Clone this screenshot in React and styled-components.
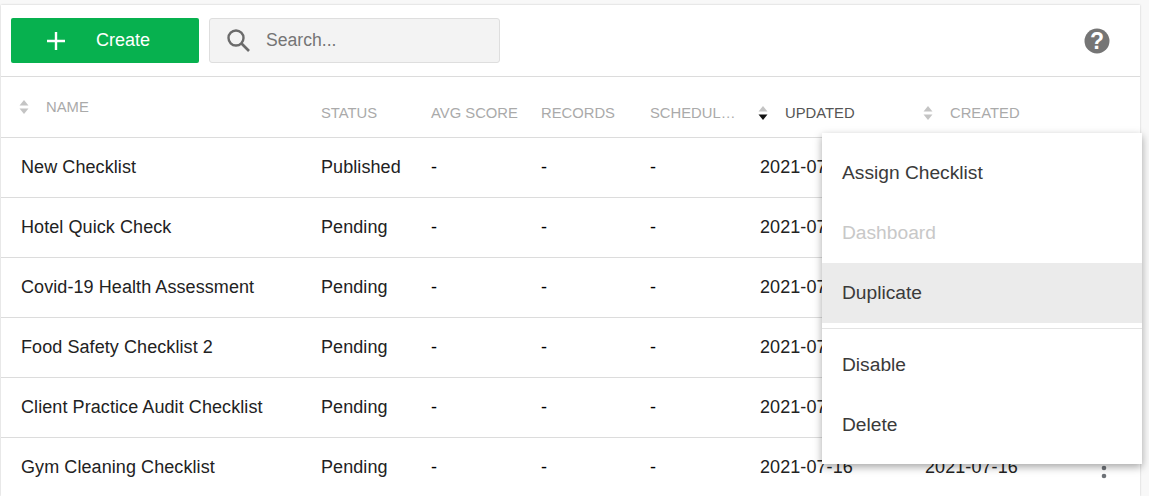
import React from 'react'
import styled, { createGlobalStyle } from 'styled-components'

const rows = [
    { name: 'New Checklist', status: 'Published' },
    { name: 'Hotel Quick Check', status: 'Pending' },
    { name: 'Covid-19 Health Assessment', status: 'Pending' },
    { name: 'Food Safety Checklist 2', status: 'Pending' },
    { name: 'Client Practice Audit Checklist', status: 'Pending' },
    { name: 'Gym Cleaning Checklist', status: 'Pending' },
]

const GRID = '300px 110px 110px 109px 110px 165px 1fr'

const GlobalStyle = createGlobalStyle`
    html, body {
        margin: 0;
        height: 100%;
        overflow: hidden;
        background: #f8f8f8;
        font-family: "Liberation Sans", Arial, sans-serif;
    }
`
const Page = styled.div`
    position: relative;
    width: 1149px;
    height: 496px;
    padding: 5px 9px 0 1px;
    box-sizing: border-box;
    overflow: hidden;
`
const Card = styled.div`
    background: #fff;
    height: 100%;
    box-shadow: 0 0 2px rgba(0, 0, 0, 0.2);
`
const Toolbar = styled.div`
    display: flex;
    align-items: center;
    height: 72px;
    padding: 0 30px 0 10px;
    box-sizing: border-box;
    border-bottom: 1px solid #dcdcdc;
    gap: 10px;
`
const CreateButton = styled.button`
    display: flex;
    align-items: center;
    width: 188px;
    height: 45px;
    padding: 0 0 0 36px;
    border: 0;
    border-radius: 2px;
    background: #07b14f;
    color: #fff;
    font: 18px "Liberation Sans", Arial, sans-serif;
    gap: 31px;
`
const SearchBox = styled.div`
    display: flex;
    align-items: center;
    width: 291px;
    height: 45px;
    padding-left: 16px;
    box-sizing: border-box;
    background: #f3f3f3;
    border: 1px solid #dedede;
    border-radius: 3px;
    color: #757575;
    font-size: 17.6px;
    gap: 14px;
`
const HelpIcon = styled.svg`
    margin-left: auto;
    width: 26px;
    height: 26px;
`
const HeadRow = styled.div`
    display: grid;
    grid-template-columns: ${GRID};
    height: 60px;
    border-bottom: 1px solid #dcdcdc;
    padding-left: 20px;
`
const HeadCell = styled.div`
    display: flex;
    align-items: center;
    align-self: ${({ $high }) => ($high ? 'start' : 'end')};
    height: 20px;
    margin-top: ${({ $high }) => ($high ? '20px' : '0')};
    margin-bottom: ${({ $high }) => ($high ? '0' : '14px')};
    margin-left: ${({ $sorted }) => ($sorted ? '-2px' : '0')};
    gap: ${({ $sorted }) => ($sorted ? '17px' : '0')};
    font-size: 14.8px;
    white-space: nowrap;
    color: ${({ $active }) => ($active ? '#555' : '#aaa')};
`
const Clipped = styled.span`
    display: block;
    width: 86px;
    overflow: hidden;
    text-overflow: ellipsis;
`
const Row = styled.div`
    display: grid;
    grid-template-columns: ${GRID};
    align-items: center;
    height: 59px;
    border-bottom: 1px solid #dcdcdc;
    padding-left: 20px;
    color: #222;
    font-size: 18px;
    letter-spacing: 0.08px;
    white-space: nowrap;
    &:last-child {
        border-bottom: 0;
    }
`
const Dash = styled.span`
    color: #000;
`
const Kebab = styled.svg`
    position: absolute;
    left: 1098px;
    top: 457px;
    width: 12px;
    height: 22px;
`
const Menu = styled.div`
    position: absolute;
    left: 822px;
    top: 133px;
    width: 320px;
    padding: 10px 0 9px;
    background: #fff;
    box-shadow: 0 3px 8px rgba(0, 0, 0, 0.35);
`
const MenuItem = styled.div`
    display: flex;
    align-items: center;
    height: 60px;
    padding-left: 20px;
    font-size: 19.2px;
    color: ${({ $disabled }) => ($disabled ? '#c8c8c8' : '#3a3a3a')};
    background: ${({ $hover }) => ($hover ? '#ebebeb' : 'transparent')};
`
const MenuDivider = styled.div`
    height: 1px;
    margin: 5px 0 6px;
    background: #e3e3e3;
`

const SortIcon = ({ active }) => (
    <svg width="10" height="16" viewBox="0 0 10 16">
        <path d="M0.5 6.5 L5 1 L9.5 6.5 Z" fill="#c4c4c4" />
        <path d="M0.5 9.5 L9.5 9.5 L5 15 Z" fill={active ? '#111' : '#c4c4c4'} />
    </svg>
)

const App = () => {
    return (
        <Page>
            <GlobalStyle />
            <Card>
                <Toolbar>
                    <CreateButton>
                        <svg width="18" height="18" viewBox="0 0 18 18">
                            <path d="M9 0 V18 M0 9 H18" stroke="#fff" strokeWidth="2.4" />
                        </svg>
                        Create
                    </CreateButton>
                    <SearchBox>
                        <svg width="26" height="26" viewBox="0 0 26 26" fill="none">
                            <circle cx="10" cy="10" r="7.5" stroke="#6b6b6b" strokeWidth="2.4" />
                            <path d="M15.5 15.5 L23 23" stroke="#6b6b6b" strokeWidth="2.6" />
                        </svg>
                        Search...
                    </SearchBox>
                    <HelpIcon viewBox="0 0 26 26">
                        <circle cx="13" cy="13" r="12.5" fill="#757575" />
                        <text x="13" y="21" textAnchor="middle" fontSize="23" fontWeight="700" fontFamily="Liberation Sans" fill="#fff">?</text>
                    </HelpIcon>
                </Toolbar>
                <HeadRow>
                    <HeadCell $high $sorted><SortIcon />NAME</HeadCell>
                    <HeadCell>STATUS</HeadCell>
                    <HeadCell>AVG SCORE</HeadCell>
                    <HeadCell>RECORDS</HeadCell>
                    <HeadCell><Clipped>SCHEDULED</Clipped></HeadCell>
                    <HeadCell $sorted $active><SortIcon active />UPDATED</HeadCell>
                    <HeadCell $sorted><SortIcon />CREATED</HeadCell>
                </HeadRow>
                {rows.map((row, index) => (
                    <Row key={index}>
                        <span>{row.name}</span>
                        <span>{row.status}</span>
                        <Dash>-</Dash>
                        <Dash>-</Dash>
                        <Dash>-</Dash>
                        <span>2021-07-16</span>
                        <span>2021-07-16</span>
                    </Row>
                ))}
            </Card>
            <Kebab viewBox="0 0 12 22">
                <circle cx="6" cy="3" r="2.3" fill="#6f7378" />
                <circle cx="6" cy="11" r="2.3" fill="#6f7378" />
                <circle cx="6" cy="19" r="2.3" fill="#6f7378" />
            </Kebab>
            <Menu>
                <MenuItem>Assign Checklist</MenuItem>
                <MenuItem $disabled>Dashboard</MenuItem>
                <MenuItem $hover>Duplicate</MenuItem>
                <MenuDivider />
                <MenuItem>Disable</MenuItem>
                <MenuItem>Delete</MenuItem>
            </Menu>
        </Page>
    )
}

export default App
